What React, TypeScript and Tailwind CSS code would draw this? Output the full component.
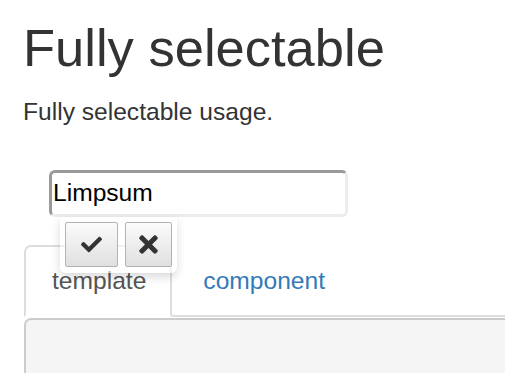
import { FaCheck, FaTimes } from 'react-icons/fa';

export default function App() {
  return (
    <div className="w-[505px] h-[373px] overflow-hidden bg-white font-['Liberation_Sans',Arial,sans-serif] text-[#333]">
      <div className="w-[720px] pl-[23px]">
        <h1 className="pt-[19px] text-[52.5px] leading-[57px] font-normal">Fully selectable</h1>
        <p className="mt-[19px] text-[24.6px] leading-[34px]">Fully selectable usage.</p>

        <div className="relative mt-[41px] ml-[26px] w-[299px]">
          <div className="h-[47px] rounded-[6px] border-[3px] border-t-[#9a9a9a] border-l-[#9a9a9a] border-r-[#ececec] border-b-[#ececec] flex items-center pl-[1px] text-[24.6px] text-black">
            Limpsum
          </div>
          <div className="absolute left-[11px] top-[47px] z-10 flex gap-[7px] pt-[5px] pb-[6px] px-[5px] rounded-b-[6px] bg-white/60 shadow-[0_4px_10px_rgba(0,0,0,0.15)]">
            <button className="w-[53px] h-[45px] flex items-center justify-center rounded-[2px] border border-[#b3b3b3] bg-gradient-to-b from-[#fbfbfb] to-[#e0e0e0] text-[#333]">
              <FaCheck size={21} />
            </button>
            <button className="w-[47px] h-[45px] flex items-center justify-center rounded-[2px] border border-[#b3b3b3] bg-gradient-to-b from-[#fbfbfb] to-[#e0e0e0] text-[#333]">
              <FaTimes size={27} />
            </button>
          </div>
        </div>

        <div className="mt-[28px] ml-[1px]">
          <ul className="flex border-b-2 border-[#ddd]">
            <li className="-mb-[2px]">
              <span className="block pl-[26px] pr-[24px] py-[17px] text-[24.6px] leading-[34px] text-[#555] bg-white border-2 border-[#ddd] border-b-white rounded-t-[7px]">
                template
              </span>
            </li>
            <li className="ml-[3px] -mb-[2px]">
              <span className="block px-[26px] py-[17px] text-[24.6px] leading-[34px] text-[#337ab7] border-2 border-transparent">
                component
              </span>
            </li>
          </ul>
          <div className="mt-[1px] h-[80px] rounded-[7px] border-2 border-[#ccc] bg-[#f5f5f5]"></div>
        </div>
      </div>
    </div>
  );
}
